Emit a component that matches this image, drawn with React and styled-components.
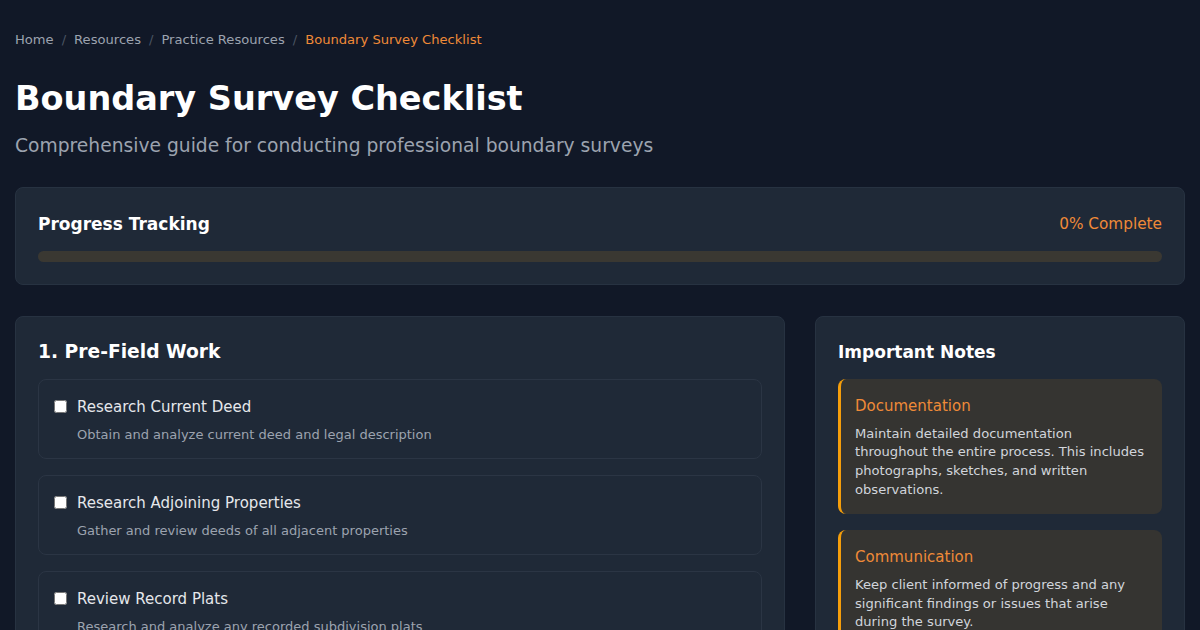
import React from "react";
import styled, { createGlobalStyle } from "styled-components";

const Global = createGlobalStyle`
  html, body { margin: 0; padding: 0; background: #111827; }
  body { font-family: "DejaVu Sans", Verdana, sans-serif; color: #f3f4f6; line-height: 1.5; }
  * { box-sizing: border-box; }
`;

const Page = styled.div`
  padding: 30px 15px 40px;
  min-height: 630px;
`;

const Crumbs = styled.nav`
  display: flex;
  align-items: center;
  gap: 8px;
  font-size: 13.1px;
  color: #9ca3af;
  margin-bottom: 29px;
`;

const Crumb = styled.span`
  color: ${(p) => (p.$active ? "#ef8a38" : "#9ca3af")};
`;

const Sep = styled.span`
  color: #4b5563;
`;

const Title = styled.h1`
  margin: 0 0 13px;
  font-size: 33.5px;
  font-weight: 700;
  color: #ffffff;
  line-height: 1.2;
`;

const Subtitle = styled.p`
  margin: 0 0 27px;
  font-size: 18.7px;
  color: #9ca3af;
`;

const Card = styled.section`
  background: #1f2937;
  border: 1px solid #273241;
  border-radius: 8px;
  padding: ${(p) => p.$pad || "22px"};
`;

const ProgressHead = styled.div`
  display: flex;
  justify-content: space-between;
  align-items: center;
  margin-bottom: 14px;
`;

const CardTitle = styled.h2`
  margin: 0;
  font-size: 17px;
  font-weight: 700;
  color: #ffffff;
`;

const Percent = styled.span`
  font-size: 15.3px;
  color: #ef8a38;
`;

const Track = styled.div`
  height: 11px;
  border-radius: 999px;
  background: #3a3832;
  overflow: hidden;
`;

const Fill = styled.div`
  height: 100%;
  background: #ef8a38;
`;

const Grid = styled.div`
  display: grid;
  grid-template-columns: 1fr 370px;
  gap: 30px;
  margin-top: 31px;
  align-items: start;
`;

const SectionTitle = styled.h3`
  margin: 0 0 13px;
  font-size: ${(p) => p.$size || "18.7px"};
  line-height: 26.7px;
  font-weight: 700;
  color: #ffffff;
`;

const List = styled.div`
  display: flex;
  flex-direction: column;
  gap: 16px;
`;

const Item = styled.label`
  display: flex;
  align-items: flex-start;
  gap: 10px;
  padding: 16px 16px 14px 15px;
  border: 1px solid #2b3544;
  border-radius: 8px;
  background: #1f2937;
`;

const Box = styled.input`
  margin: 4px 0 0;
  width: 13px;
  height: 13px;
  flex: none;
  accent-color: #ef8a38;
`;

const ItemText = styled.div`
  display: flex;
  flex-direction: column;
  gap: 6px;
`;

const ItemTitle = styled.span`
  font-size: 15px;
  color: #e5e7eb;
`;

const ItemDesc = styled.span`
  font-size: 13px;
  color: #9ca3af;
`;

const Notes = styled.div`
  display: flex;
  flex-direction: column;
  gap: 16px;
`;

const Note = styled.div`
  background: #353431;
  border-left: 3px solid #f59e0b;
  border-radius: 8px;
  padding: 16px 16px 15px 14px;
`;

const NoteTitle = styled.h4`
  margin: 0 0 7px;
  font-size: 15px;
  font-weight: 400;
  color: #ef8a38;
`;

const NoteText = styled.p`
  margin: 0;
  font-size: 13.1px;
  line-height: 18.7px;
  color: #d1d5db;
`;

const items = [
  ["Research Current Deed", "Obtain and analyze current deed and legal description"],
  ["Research Adjoining Properties", "Gather and review deeds of all adjacent properties"],
  ["Review Record Plats", "Research and analyze any recorded subdivision plats"],
  ["Check Easements", "Identify all recorded easements affecting the property"],
];

const notes = [
  [
    "Documentation",
    "Maintain detailed documentation throughout the entire process. This includes photographs, sketches, and written observations.",
  ],
  [
    "Communication",
    "Keep client informed of progress and any significant findings or issues that arise during the survey.",
  ],
  [
    "Safety",
    "Always follow proper safety procedures in the field and be aware of your surroundings.",
  ],
];

export default function App() {
  const progress = 0;
  return (
    <>
      <Global />
      <Page>
        <Crumbs>
          <Crumb>Home</Crumb>
          <Sep>/</Sep>
          <Crumb>Resources</Crumb>
          <Sep>/</Sep>
          <Crumb>Practice Resources</Crumb>
          <Sep>/</Sep>
          <Crumb $active>Boundary Survey Checklist</Crumb>
        </Crumbs>
        <Title>Boundary Survey Checklist</Title>
        <Subtitle>Comprehensive guide for conducting professional boundary surveys</Subtitle>
        <Card $pad="24px 22px 22px">
          <ProgressHead>
            <CardTitle>Progress Tracking</CardTitle>
            <Percent>{progress}% Complete</Percent>
          </ProgressHead>
          <Track>
            <Fill style={{ width: `${progress}%` }} />
          </Track>
        </Card>
        <Grid>
          <Card>
            <SectionTitle>1. Pre-Field Work</SectionTitle>
            <List>
              {items.map(([t, d]) => (
                <Item key={t}>
                  <Box type="checkbox" />
                  <ItemText>
                    <ItemTitle>{t}</ItemTitle>
                    <ItemDesc>{d}</ItemDesc>
                  </ItemText>
                </Item>
              ))}
            </List>
          </Card>
          <Card>
            <SectionTitle $size="17px">Important Notes</SectionTitle>
            <Notes>
              {notes.map(([t, d]) => (
                <Note key={t}>
                  <NoteTitle>{t}</NoteTitle>
                  <NoteText>{d}</NoteText>
                </Note>
              ))}
            </Notes>
          </Card>
        </Grid>
      </Page>
    </>
  );
}
